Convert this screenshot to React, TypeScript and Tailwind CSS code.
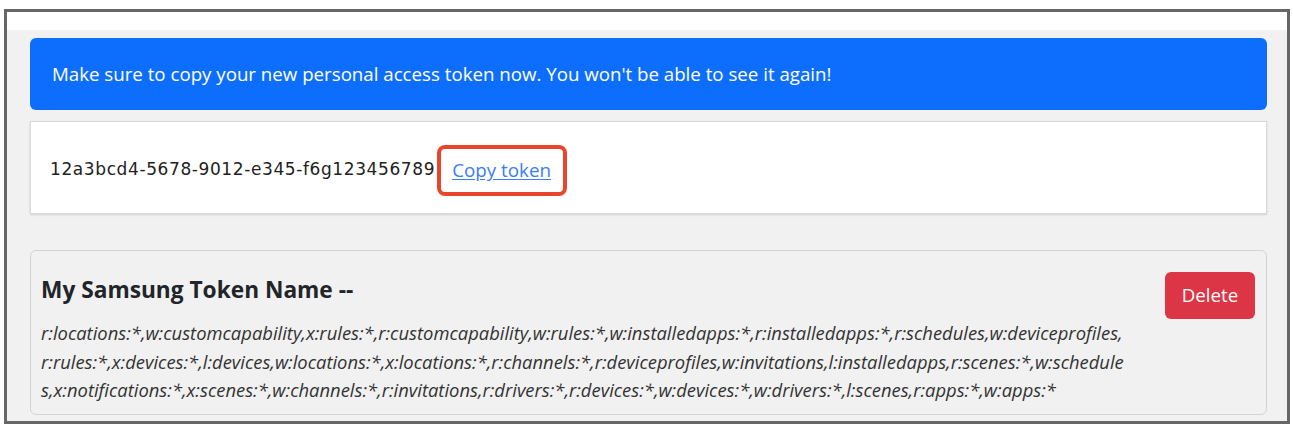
import React from "react";

const lines = [
  "r:locations:*,w:customcapability,x:rules:*,r:customcapability,w:rules:*,w:installedapps:*,r:installedapps:*,r:schedules,w:deviceprofiles,",
  "r:rules:*,x:devices:*,l:devices,w:locations:*,x:locations:*,r:channels:*,r:deviceprofiles,w:invitations,l:installedapps,r:scenes:*,w:schedule",
  "s,x:notifications:*,x:scenes:*,w:channels:*,r:invitations,r:drivers:*,r:devices:*,w:devices:*,w:drivers:*,l:scenes,r:apps:*,w:apps:*",
];

export default function App() {
  return (
    <div className="w-[1293px] h-[432px] bg-white pt-[9px] pl-[4px] overflow-hidden">
      <div className="w-[1286px] h-[415px] border-[3px] border-[#666666] flex flex-col overflow-hidden">
        <div className="h-[18px] bg-white shrink-0" />
        <div className="flex-1 bg-[#f1f1f1] pl-[23px] pr-[20px] pt-[8px]">
          <div
            className="h-[72px] rounded-[6px] bg-[#0d6efd] flex items-center pl-[22px] text-white text-[18.7px]"
            style={{ fontFamily: '"Open Sans", "Noto Sans", sans-serif' }}
          >
            Make sure to copy your new personal access token now. You won't be able to see it again!
          </div>
          <div className="mt-[11px] h-[93px] bg-white border border-[#d9d9d9] shadow-[0_1px_2px_rgba(0,0,0,0.15)] flex items-center pl-[19px] pt-[5px]">
            <span
              className="text-[17px] text-[#222] tracking-[0.6px]"
              style={{ fontFamily: '"DejaVu Sans", sans-serif' }}
            >
              12a3bcd4-5678-9012-e345-f6g123456789
            </span>
            <span className="ml-[2px] h-[51px] flex items-center border-[4px] border-[#e8452c] rounded-[8px] pl-[11px] pr-[12px]">
              <a
                href="#"
                className="text-[18.8px] text-[#3b7df5] underline underline-offset-[2px]"
                style={{ fontFamily: '"Open Sans", "Noto Sans", sans-serif' }}
              >
                Copy token
              </a>
            </span>
          </div>
          <div className="mt-[36px] h-[165px] rounded-[6px] border border-[#d4d4d4] bg-[#f1f1f1] flex pl-[10px] pr-[11px] pt-[21px]">
            <div className="flex-1 pt-[6px] min-w-0">
              <div
                className="text-[22.7px] font-bold text-[#212529] leading-[24px]"
                style={{ fontFamily: '"Open Sans", "Noto Sans", sans-serif' }}
              >
                My Samsung Token Name --
              </div>
              <div
                className="mt-[17px] text-[18.4px] italic text-[#333] leading-[28.5px] whitespace-nowrap"
                style={{ fontFamily: '"Open Sans", "Noto Sans", sans-serif' }}
              >
                {lines.map((l, i) => (
                  <div key={i}>{l}</div>
                ))}
              </div>
            </div>
            <button
              className="shrink-0 self-start w-[90px] h-[47px] rounded-[6px] bg-[#dc3545] text-white text-[18.7px]"
              style={{ fontFamily: '"Open Sans", "Noto Sans", sans-serif' }}
            >
              Delete
            </button>
          </div>
        </div>
      </div>
    </div>
  );
}
